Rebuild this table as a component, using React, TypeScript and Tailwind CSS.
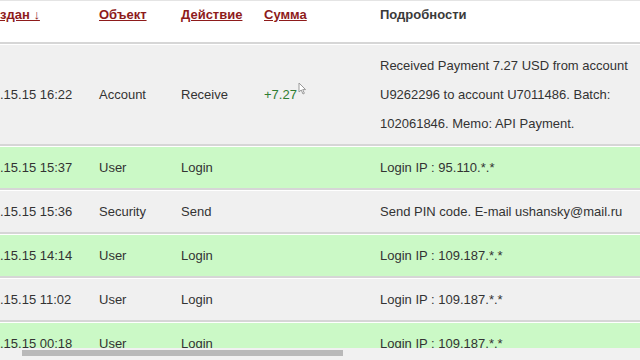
import React from 'react'

interface LogRow {
  date: string
  object: string
  action: string
  amount?: string
  details: string[]
  green?: boolean
}

const rows: LogRow[] = [
  {
    date: '.15.15 16:22',
    object: 'Account',
    action: 'Receive',
    amount: '+7.27',
    details: [
      'Received Payment 7.27 USD from account',
      'U9262296 to account U7011486. Batch:',
      '102061846. Memo: API Payment.',
    ],
  },
  { date: '.15.15 15:37', object: 'User', action: 'Login', details: ['Login IP : 95.110.*.*'], green: true },
  { date: '.15.15 15:36', object: 'Security', action: 'Send', details: ['Send PIN code. E-mail ushansky@mail.ru'] },
  { date: '.15.15 14:14', object: 'User', action: 'Login', details: ['Login IP : 109.187.*.*'], green: true },
  { date: '.15.15 11:02', object: 'User', action: 'Login', details: ['Login IP : 109.187.*.*'] },
  { date: '.15.15 00:18', object: 'User', action: 'Login', details: ['Login IP : 109.187.*.*'], green: true },
]

const cols = ['w-[99px]', 'w-[82px]', 'w-[83px]', 'w-[116px]']

function Cursor() {
  return (
    <svg className="absolute left-[298px] top-[82px]" width="9" height="13" viewBox="0 0 9 13">
      <path d="M1 1 L1 10 L3.2 8 L5 12 L6.4 11.3 L4.7 7.6 L7.6 7.6 Z" fill="#fff" stroke="#9a9a9a" strokeWidth="1" />
    </svg>
  )
}

export default function App() {
  return (
    <div
      className="relative w-[640px] h-[360px] overflow-hidden bg-white text-[13px] text-[#333] whitespace-nowrap"
      style={{ fontFamily: '"Liberation Sans", Arial, sans-serif' }}
    >
      {/* Header */}
      <div className="flex h-[42px] border-t border-[#e4e4e4] pt-[4px] leading-5 font-bold">
        <div className={cols[0]}>
          <span className="text-[#8e1b1b] underline">здан ↓</span>
        </div>
        <div className={cols[1]}>
          <span className="text-[#8e1b1b] underline">Объект</span>
        </div>
        <div className={cols[2]}>
          <span className="text-[#8e1b1b] underline">Действие</span>
        </div>
        <div className={cols[3]}>
          <span className="text-[#8e1b1b] underline">Сумма</span>
        </div>
        <div className="flex-1 text-[#3a3a3a]">Подробности</div>
      </div>
      <div className="h-[2px] bg-[#d6d6d6] mb-px" />

      {/* Rows */}
      {rows.map((r, i) => (
        <div key={i}>
          <div
            className={
              'flex items-center ' +
              (r.details.length > 1 ? 'h-[99px] ' : 'h-[41px] ') +
              (r.green ? 'bg-[#cbf9c6]' : 'bg-[#f0f0f0]')
            }
          >
            <div className={cols[0]}>{r.date}</div>
            <div className={cols[1]}>{r.object}</div>
            <div className={cols[2]}>{r.action}</div>
            <div className={cols[3] + ' text-[#2f7d32]'}>{r.amount}</div>
            <div className="flex-1 leading-[29px]">
              {r.details.map((d, j) => (
                <div key={j}>{d}</div>
              ))}
            </div>
          </div>
          <div className="h-[2px] bg-[#d6d6d6] mb-px" />
        </div>
      ))}

      <Cursor />

      {/* Horizontal scrollbar */}
      <div className="absolute left-0 right-0 bottom-0 h-[12px] bg-[#f1f1f1]">
        <div className="absolute left-[22px] top-[2px] w-[321px] h-[6px] bg-[#b9b9b9]" />
      </div>
    </div>
  )
}
